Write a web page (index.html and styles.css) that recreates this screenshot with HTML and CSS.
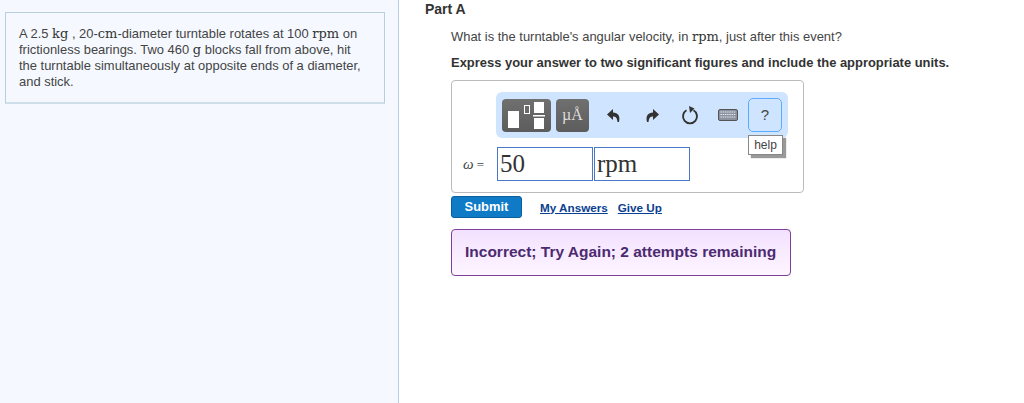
FILE: index.html
```html
<!DOCTYPE html>
<html>
<head>
<meta charset="utf-8">
<title>Part A</title>
<link rel="stylesheet" href="styles.css">
</head>
<body>
  <div class="side">
    <div class="intro">
      A 2.5 <span class="math">kg</span> , 20-<span class="math">cm</span>-diameter turntable rotates at 100 <span class="math">rpm</span> on<br>
      frictionless bearings. Two 460 <span class="math">g</span> blocks fall from above, hit<br>
      the turntable simultaneously at opposite ends of a diameter,<br>
      and stick.
    </div>
  </div>
  <div class="main">
    <h2 class="part">Part A</h2>
    <div class="question">
      <p class="ask">What is the turntable's angular velocity, in <span class="math">rpm</span>, just after this event?</p>
      <p class="express">Express your answer to two significant figures and include the appropriate units.</p>

      <div class="answer">
        <div class="toolbar">
          <div class="tool tool-wide">
            <svg width="44" height="30" viewBox="0 0 44 30">
              <rect x="3" y="11" width="11" height="17" fill="#fff"/>
              <rect x="19.5" y="5.5" width="5" height="8" fill="none" stroke="#fff"/>
              <rect x="29" y="2" width="10" height="11" fill="#fff"/>
              <rect x="28" y="15" width="12" height="1.5" fill="#fff"/>
              <rect x="29" y="18" width="10" height="11" fill="#fff"/>
            </svg>
          </div>
          <div class="tool tool-unit">µÅ</div>
          <div class="actions">
            <svg class="act act-undo" width="16" height="18" viewBox="0 0 16 18"><path d="M7 3 1 8.500 7 14V10.500c2.500 0 4 1 4.500 5.500h1.500C14.500 10 12 6.500 7 6.500z" fill="#333"/></svg>
            <svg class="act act-redo" width="16" height="18" viewBox="0 0 16 18"><path d="M9 3l6 5.500L9 14V10.500c-2.500 0-4 1-4.500 5.500H3C1.500 10 4 6.500 9 6.500z" fill="#333"/></svg>
            <svg class="act act-reset" width="18" height="20" viewBox="0 0 18 20"><path d="M5.500 5.300A7 7 0 1 0 12.500 5.300" fill="none" stroke="#333" stroke-width="1.900"/><path d="M8 1 13.500 3.500 9 8z" fill="#333"/></svg>
            <svg class="act act-keys" width="20" height="12" viewBox="0 0 20 12"><rect x=".5" y=".5" width="19" height="11" rx="1.500" fill="#8b93a0" stroke="#555"/><path d="M2.500 3h15M2.500 5.500h15M2.500 8h15" stroke="#e4e8ee" stroke-width="1.200" stroke-dasharray="1.500 .7"/></svg>
          </div>
          <div class="help-btn">?<span class="tip">help</span></div>
        </div>
        <div class="entry">
          <span class="omega"><i>ω</i> =</span>
          <div class="field field-value">50</div>
          <div class="field field-units">rpm</div>
        </div>
      </div>

      <div class="buttons">
        <a class="submit">Submit</a>
        <a class="link link-first">My Answers</a>
        <a class="link">Give Up</a>
      </div>

      <div class="feedback">Incorrect; Try Again; 2 attempts remaining</div>
    </div>
  </div>
</body>
</html>
```

FILE: styles.css
```css
html, body {
  height: 100%;
  margin: 0;
}

body {
  display: flex;
  overflow: hidden;
  font-family: "Liberation Sans", Arial, sans-serif;
  font-size: 12.950px;
  color: #444;
  background: #fff;
}

.math {
  font-family: "DejaVu Serif", serif;
  font-size: 13px;
  line-height: 1px;
  color: #333;
}

.side {
  width: 398px;
  height: 100%;
  padding-top: 12px;
  background: #f5f9ff;
  border-right: 1px solid #b7cde0;
}

.intro {
  width: 380px;
  height: 92px;
  box-sizing: border-box;
  margin-left: 5px;
  padding: 13px 0 0 13px;
  border: 1px solid #b7cde0;
  border-bottom: 2px solid #cfdeeb;
  line-height: 16px;
  white-space: nowrap;
}

.main {
  flex: 1;
  padding-left: 26px;
}

.part {
  margin: 1px 0 0;
  font-size: 14px;
  line-height: 16px;
  color: #333;
}

.question {
  margin-left: 26px;
}

.ask {
  margin: 12px 0 0;
  line-height: 16px;
}

.express {
  margin: 10px 0 0;
  font-weight: bold;
  line-height: 16px;
  color: #333;
  white-space: nowrap;
}

.answer {
  width: 353px;
  height: 113px;
  box-sizing: border-box;
  margin-top: 9px;
  border: 1px solid #bbb;
  border-radius: 4px;
  background: #fff;
}

.toolbar {
  display: flex;
  align-items: center;
  width: 292px;
  height: 46px;
  margin: 11px 0 0 44px;
  padding-left: 6px;
  box-sizing: border-box;
  background: #cfe5ff;
  border-radius: 6px;
}

.tool {
  display: flex;
  align-items: center;
  justify-content: center;
  height: 33px;
  border-radius: 4px;
  background: linear-gradient(#707070, #5c5c5c);
  color: #ddd;
}

.tool-wide {
  width: 49px;
}

.tool-unit {
  width: 33px;
  margin-left: 5px;
  font-family: "Liberation Serif", serif;
  font-size: 16px;
}

.actions {
  display: flex;
  align-items: center;
  margin-left: 17px;
}

.act-redo {
  margin-left: 22px;
}

.act-reset {
  margin-left: 21px;
}

.act-keys {
  margin-left: 19px;
}

.help-btn {
  position: relative;
  width: 34px;
  height: 34px;
  box-sizing: border-box;
  margin-left: 10px;
  border: 1px solid #5cabff;
  border-radius: 5px;
  font-size: 15px;
  line-height: 32px;
  text-align: center;
}

.tip {
  position: absolute;
  top: 36px;
  left: -1px;
  width: 35px;
  height: 20px;
  box-sizing: border-box;
  border: 1px solid #888;
  background: #fff;
  box-shadow: 3px 3px 1px #999;
  font-size: 12px;
  line-height: 18px;
}

.entry {
  display: flex;
  align-items: center;
  margin: 9px 0 0 11px;
}

.omega {
  width: 34px;
  font-family: "Liberation Serif", serif;
  font-size: 13px;
}

.omega i {
  font-size: 15px;
}

.field {
  height: 34px;
  box-sizing: border-box;
  border: 1px solid #4a78c8;
  padding-left: 2px;
  font-family: "Liberation Serif", serif;
  font-size: 25px;
  line-height: 32px;
  color: #333;
}

.field-value {
  width: 96px;
}

.field-units {
  width: 96px;
  margin-left: 1px;
}

.buttons {
  display: flex;
  align-items: center;
  margin-top: 3px;
}

.submit {
  width: 71px;
  height: 22px;
  box-sizing: border-box;
  border: 1px solid #0b5f9e;
  border-radius: 3px;
  background: #0f7ac6;
  color: #fff;
  font-weight: bold;
  line-height: 20px;
  text-align: center;
}

.link {
  margin-left: 10px;
  color: #0b3f91;
  font-weight: bold;
  font-size: 11.700px;
  text-decoration: underline;
}

.link-first {
  margin-left: 18px;
}

.feedback {
  width: 340px;
  height: 47px;
  box-sizing: border-box;
  margin-top: 11px;
  padding-left: 13px;
  border: 1px solid #7d3f98;
  border-radius: 4px;
  background: linear-gradient(#f3e1ff, #fdf5ff);
  color: #4d2a70;
  font-size: 15.500px;
  font-weight: bold;
  line-height: 44px;
  white-space: nowrap;
}
```
